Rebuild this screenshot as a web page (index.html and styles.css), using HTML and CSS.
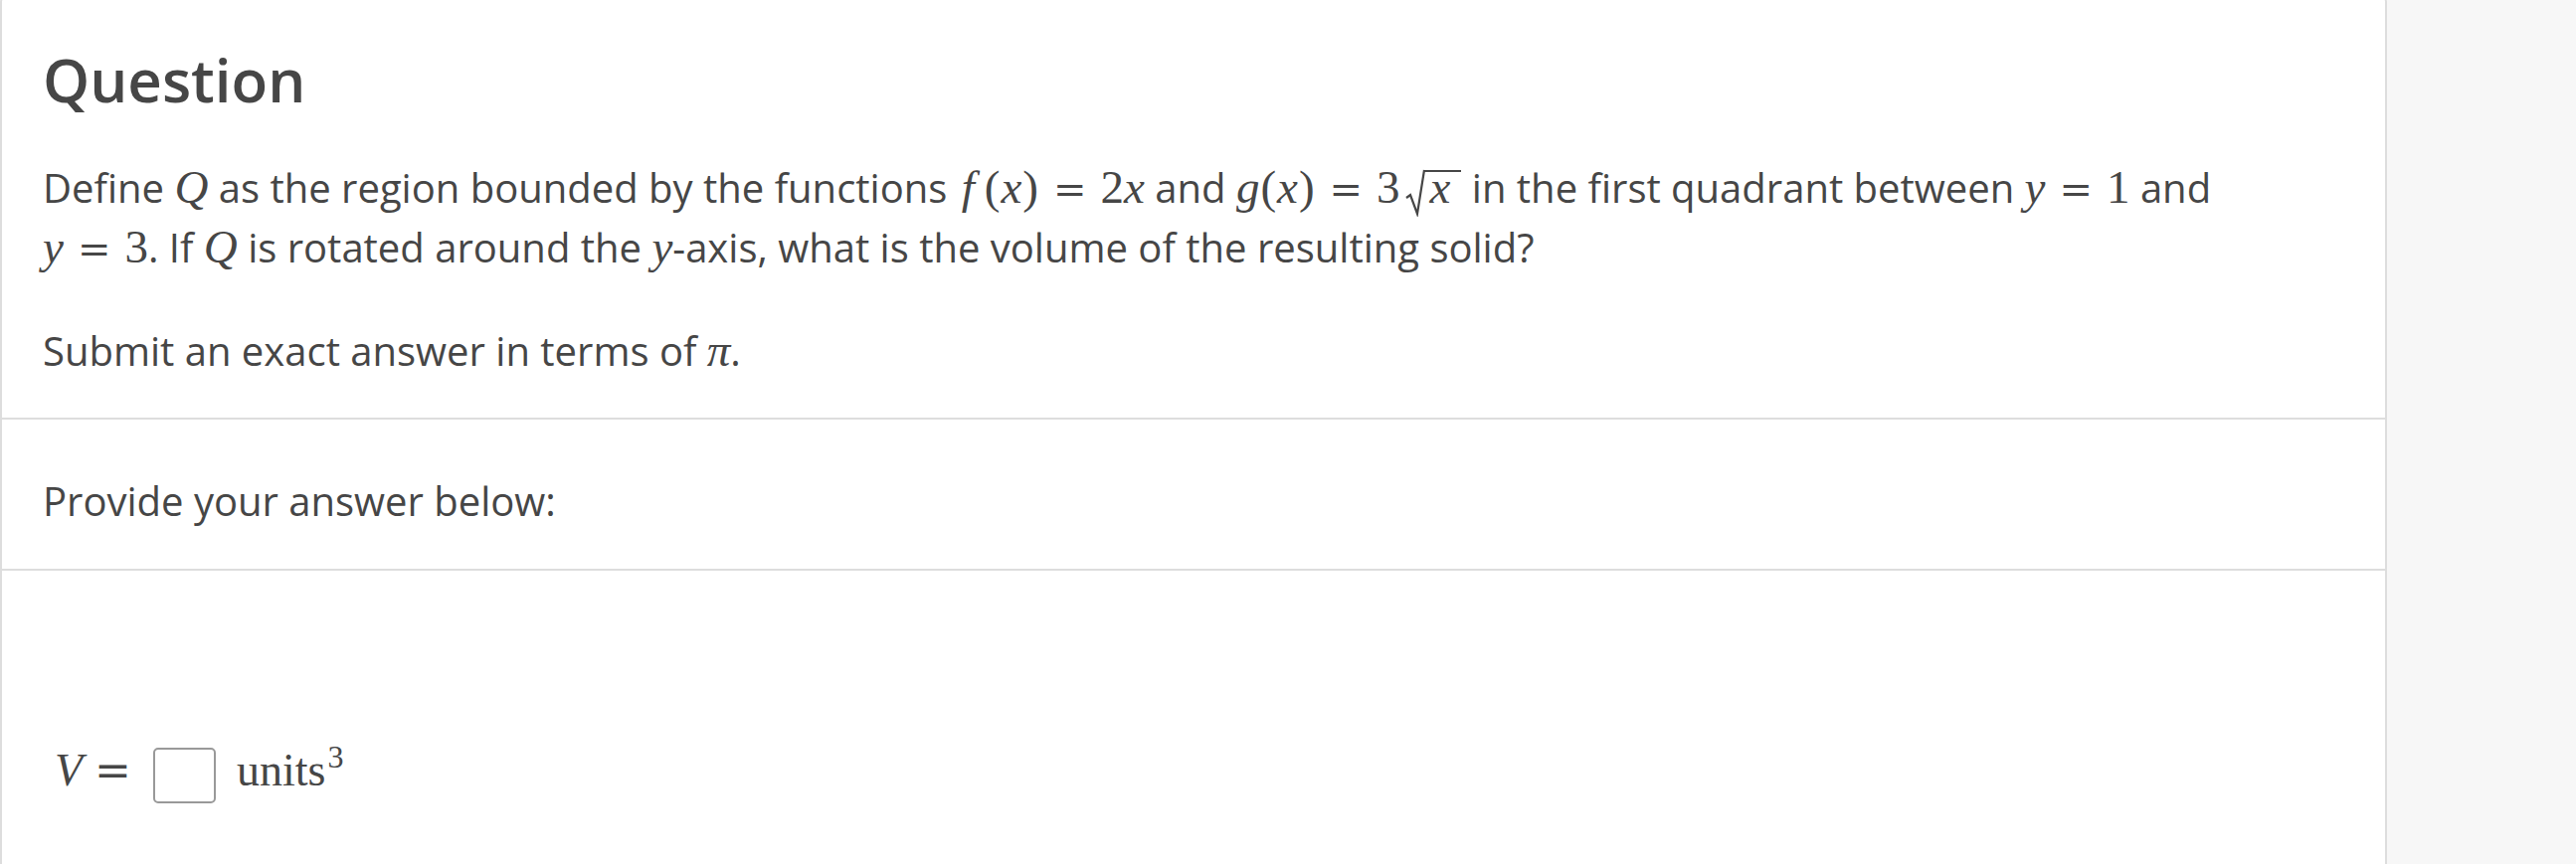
FILE: index.html
```html
<!DOCTYPE html>
<html lang="en">
<head>
<meta charset="utf-8">
<title>Question</title>
<link rel="stylesheet" href="styles.css">
</head>
<body>
<div class="card">
  <section class="sec sec-question">
    <h1 class="title">Question</h1>
    <p class="para">Define <span class="m mi">Q</span> as the region bounded by the functions <span class="m"><span class="mi fn">f</span><span class="p">(</span><span class="mi">x</span><span class="p">)</span><span class="rel">=</span>2<span class="mi">x</span></span> and <span class="m"><span class="mi">g</span><span class="p">(</span><span class="mi">x</span><span class="p">)</span><span class="rel">=</span>3<span class="sqrt"><svg class="surd" width="20" height="48" viewBox="0 0 20 48"><path d="M1 29 L5 26 L12 45 L19 1" fill="none" stroke="#464646" stroke-width="2.2" stroke-linejoin="miter"/></svg><span class="radicand mi">x</span></span></span> in the first quadrant between <span class="m"><span class="mi">y</span><span class="rel">=</span>1</span> and<br><span class="m"><span class="mi">y</span><span class="rel">=</span>3</span>. If <span class="m mi">Q</span> is rotated around the <span class="m mi">y</span>-axis, what is the volume of the resulting solid?</p>
    <p class="para para-2">Submit an exact answer in terms of <span class="m mi">π</span>.</p>
  </section>
  <section class="sec sec-prompt">
    <p class="para">Provide your answer below:</p>
  </section>
  <section class="sec sec-answer">
    <div class="answer-row"><span class="mi v">V</span><span class="rel rel-lg">=</span><span class="answer-box"></span><span class="units">units</span><span class="sup">3</span></div>
  </section>
</div>
</body>
</html>
```

FILE: styles.css
```css
html, body {
  margin: 0;
  padding: 0;
  background: #f7f7f7;
}

body {
  font-family: "Open Sans", "Noto Sans", sans-serif;
  color: #464646;
  overflow: hidden;
}

.card {
  box-sizing: border-box;
  width: 2400px;
  min-height: 900px;
  margin-top: -4px;
  background: #ffffff;
  border: 2px solid #dddddd;
  border-radius: 6px;
  display: flex;
  flex-direction: column;
}

.sec {
  padding-left: 41px;
  padding-right: 41px;
}

.sec-question {
  padding-top: 46px;
  padding-bottom: 37px;
  border-bottom: 2px solid #dddddd;
}

.sec-prompt {
  padding-top: 52px;
  padding-bottom: 38px;
  border-bottom: 2px solid #dddddd;
}

.sec-answer {
  flex: 1;
  padding-top: 157px;
}

.title {
  margin: 0;
  font-size: 60px;
  font-weight: 600;
  line-height: 1.2;
  color: #464646;
}

.para {
  margin: 43px 0 0;
  font-size: 40px;
  line-height: 60px;
}

.para-2 {
  margin-top: 44px;
}

.sec-prompt .para {
  margin-top: 0;
}

.m {
  font-family: "Liberation Serif", "Times New Roman", serif;
  font-size: 47px;
  line-height: 1;
}

.mi {
  font-style: italic;
}

.fn {
  margin: 0 9px 0 4px;
}

.p {
  padding: 0 1px;
}

.rel {
  font-family: "DejaVu Serif", serif;
  font-style: normal;
  font-size: 40px;
  margin: 0 14px;
}

.sqrt {
  display: inline-block;
  white-space: nowrap;
  margin-left: 5px;
}

.surd {
  vertical-align: -14px;
}

.radicand {
  display: inline-block;
  line-height: 31px;
  border-top: 2px solid #464646;
  padding: 0 11px 0 6px;
  margin-left: -1px;
}

.answer-row {
  font-family: "Liberation Serif", "Times New Roman", serif;
  font-size: 46px;
  line-height: 60px;
  white-space: nowrap;
}

.v {
  margin-left: 12px;
}

.rel-lg {
  font-size: 44px;
  margin: 0 22px 0 12px;
}

.answer-box {
  display: inline-block;
  box-sizing: border-box;
  width: 63px;
  height: 56px;
  border: 2px solid #999999;
  border-radius: 5px;
  vertical-align: -18px;
  margin-right: 21px;
}

.sup {
  font-size: 32px;
  vertical-align: 18px;
  margin-left: 2px;
}
```
